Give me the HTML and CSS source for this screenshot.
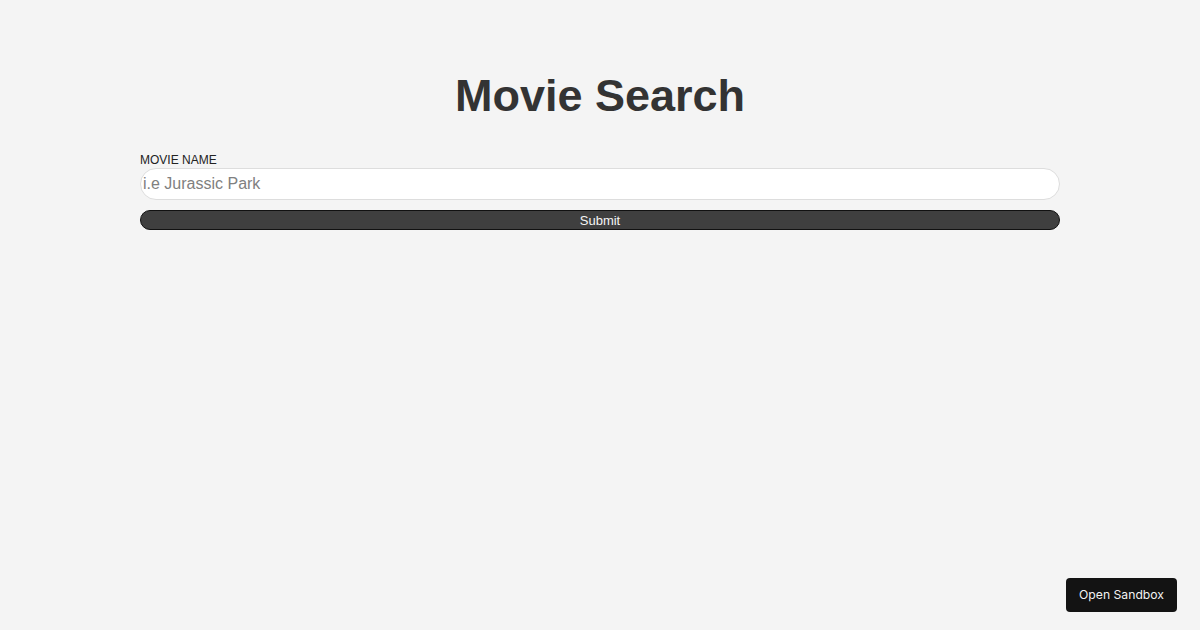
FILE: index.html
```html
<!DOCTYPE html>
<html lang="en">
<head>
  <meta charset="UTF-8">
  <meta name="viewport" content="width=device-width, initial-scale=1.0">
  <title>Movie Search</title>
  <link rel="stylesheet" href="styles.css">
</head>
<body>
  <div class="search-container">
    <h1>Movie Search</h1>
    <form id="searchForm" class="search-form">
      <label for="movieName">MOVIE NAME</label>
      <input type="text" id="movieName" placeholder="i.e Jurassic Park">
      <button id="submitBtn" type="submit">Submit</button>
    </form>
  </div>

  <a class="sandbox-btn" href="#">Open Sandbox</a>
</body>
</html>
```

FILE: styles.css
```css
body {
  margin: 0;
  height: 100vh;
  font-family: 'Liberation Sans', Arial, sans-serif;
  background-color: #f4f4f4;
  color: #333;
}

.search-container {
  width: 920px;
  margin: 0 auto;
  padding-top: 68px;
}

h1 {
  margin: 0 0 29px;
  text-align: center;
  font-size: 45px;
  line-height: 56px;
  font-weight: bold;
  color: #333;
}

.search-form {
  display: flex;
  flex-direction: column;
}

label {
  font-size: 12px;
  line-height: 14px;
  padding-bottom: 1px;
  color: #222;
}

input {
  height: 32px;
  margin: 0;
  padding: 0 2px;
  box-sizing: border-box;
  border: 1px solid #ddd;
  border-radius: 16px;
  background-color: #fff;
  font-family: 'Liberation Sans', Arial, sans-serif;
  font-size: 16px;
  color: #333;
  outline: none;
}

input::placeholder {
  color: #808080;
}

button {
  height: 20px;
  margin-top: 10px;
  padding: 0;
  border: 1px solid #111;
  border-radius: 10px;
  background-color: #3f3f3f;
  color: #f4f4f4;
  font-family: 'Liberation Sans', Arial, sans-serif;
  font-size: 13px;
  cursor: pointer;
}

.sandbox-btn {
  position: fixed;
  right: 23px;
  bottom: 18px;
  padding: 0 13px;
  height: 34px;
  line-height: 34px;
  border-radius: 4px;
  background-color: #131313;
  color: #f2f2f2;
  font-family: Inter, 'Liberation Sans', sans-serif;
  font-size: 12.2px;
  text-decoration: none;
}
```
